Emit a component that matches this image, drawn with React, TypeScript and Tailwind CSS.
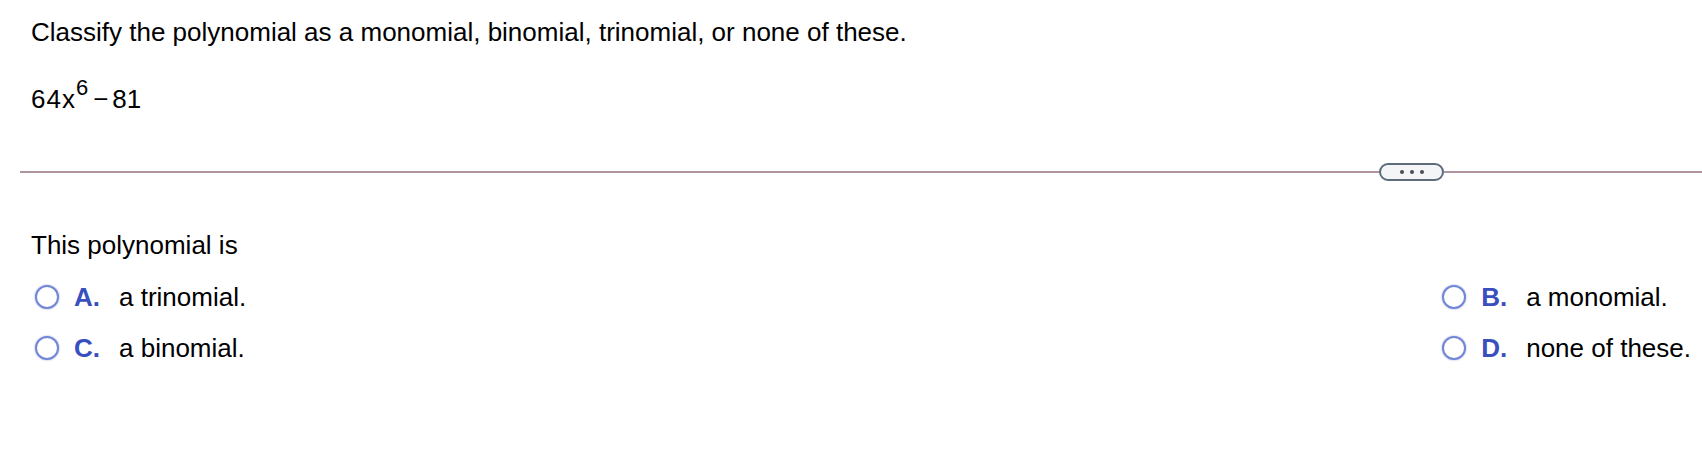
export default function App() {
  const left = [
    { key: "A.", text: "a trinomial." },
    { key: "C.", text: "a binomial." },
  ];
  const right = [
    { key: "B.", text: "a monomial." },
    { key: "D.", text: "none of these." },
  ];

  const Option = ({ k, text }: { k: string; text: string }) => (
    <div className="flex h-[30px] items-center whitespace-nowrap">
      <span className="h-[24px] w-[24px] shrink-0 rounded-full border-2 border-[#7487d6] bg-white shadow-[0_0_2px_rgba(111,130,211,0.7)]" />
      <span className="ml-[15px] w-[45px] shrink-0 font-bold text-[#3a4fbf]">{k}</span>
      <span>{text}</span>
    </div>
  );

  return (
    <div className="h-[467px] w-full bg-white pt-[17px] font-['Liberation_Sans',Arial,sans-serif] text-[26px] leading-[30px] text-black">
      <p className="pl-[31px]">
        Classify the polynomial as a monomial, binomial, trinomial, or none of these.
      </p>
      <p className="mt-[37px] pl-[31px]">
        <span className="tracking-[1px]">64x</span>
        <span className="relative -top-[13px] text-[22px]">6</span>
        <span className="ml-[5px]">−</span>
        <span className="ml-[4px]">81</span>
      </p>

      {/* separator with collapse pill */}
      <div className="mt-[47px] ml-[20px] flex h-[18px] items-center">
        <div className="h-[2px] flex-1 bg-[#b0949f]" />
        <button className="flex h-[18px] w-[65px] items-center justify-center gap-[6px] rounded-full border-2 border-[#5d6b7b] bg-[#f3f5f7]">
          <span className="h-[4px] w-[4px] rounded-full bg-[#4a4f57]" />
          <span className="h-[4px] w-[4px] rounded-full bg-[#4a4f57]" />
          <span className="h-[4px] w-[4px] rounded-full bg-[#4a4f57]" />
        </button>
        <div className="h-[2px] w-[258px] bg-[#b0949f]" />
      </div>

      <p className="mt-[49px] pl-[31px]">This polynomial is</p>

      <div className="mt-[22px] flex justify-between pl-[35px] pr-[11px]">
        <div className="flex flex-col gap-[21px]">
          {left.map((o) => (
            <Option key={o.key} k={o.key} text={o.text} />
          ))}
        </div>
        <div className="flex flex-col gap-[21px]">
          {right.map((o) => (
            <Option key={o.key} k={o.key} text={o.text} />
          ))}
        </div>
      </div>
    </div>
  );
}
